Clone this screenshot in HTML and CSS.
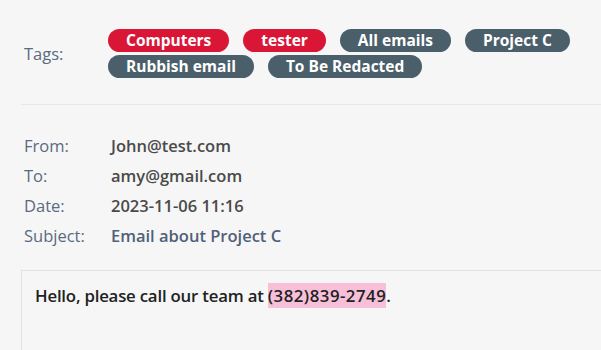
FILE: index.html
```html
<!DOCTYPE html>
<html>
<head>
<meta charset="utf-8">
<link rel="stylesheet" href="styles.css">
</head>
<body>
<div class="page">
  <section class="tags">
    <div class="tags-label">Tags:</div>
    <div class="chips">
      <span class="chip chip-red">Computers</span>
      <span class="chip chip-red">tester</span>
      <span class="chip chip-slate">All emails</span>
      <span class="chip chip-slate">Project C</span>
      <span class="chip chip-slate">Rubbish email</span>
      <span class="chip chip-slate">To Be Redacted</span>
    </div>
  </section>
  <section class="headers">
    <div class="row"><span class="label">From:</span><span class="value">John@test.com</span></div>
    <div class="row"><span class="label">To:</span><span class="value">amy@gmail.com</span></div>
    <div class="row"><span class="label">Date:</span><span class="value">2023-11-06 11:16</span></div>
    <div class="row"><span class="label">Subject:</span><span class="value subject">Email about Project C</span></div>
  </section>
  <section class="body-box">
    <p class="message">Hello, please call our team at <mark class="pii">(382)839-2749</mark>.</p>
  </section>
</div>
</body>
</html>
```
FILE: styles.css
```css
html, body {
  margin: 0;
  padding: 0;
  background: #f6f6f6;
}
body {
  font-family: "Open Sans", "Liberation Sans", sans-serif;
  font-size: 16.5px;
  overflow: hidden;
  height: 350px;
}
.page {
  padding-left: 21px;
}
.tags {
  display: flex;
  align-items: center;
  padding: 29px 0 26px 3px;
  border-bottom: 1px solid #e6e6e6;
}
.tags-label {
  width: 84px;
  flex: none;
  color: #5a6a80;
  font-size: 16.5px;
}
.chips {
  display: flex;
  flex-wrap: wrap;
  column-gap: 14px;
  row-gap: 3px;
  width: 480px;
}
.chip {
  display: inline-block;
  height: 23px;
  line-height: 23px;
  padding: 0 18px;
  border-radius: 12px;
  color: #fff;
  font-weight: 700;
  font-size: 15.5px;
}
.chip-red { background: #da1637; }
.chip-slate { background: #4b5f6b; }
.headers {
  padding: 25px 0 20px 3px;
}
.row {
  display: flex;
  height: 30px;
  align-items: center;
}
.label {
  width: 87px;
  flex: none;
  color: #5a6a80;
}
.value {
  color: #4a4a4a;
  font-weight: 600;
}
.value.subject {
  color: #4f6178;
}
.body-box {
  border: 1px solid #e2e2e2;
  border-right: none;
  height: 120px;
  padding: 12px 13px;
}
.message {
  margin: 0;
  color: #222;
  font-weight: 600;
  font-size: 16.8px;
  line-height: 25px;
  letter-spacing: -0.2px;
}
.pii {
  background: #f7c0d8;
  color: #222;
  display: inline-block;
  line-height: 25px;
  letter-spacing: 0.5px;
}
```
